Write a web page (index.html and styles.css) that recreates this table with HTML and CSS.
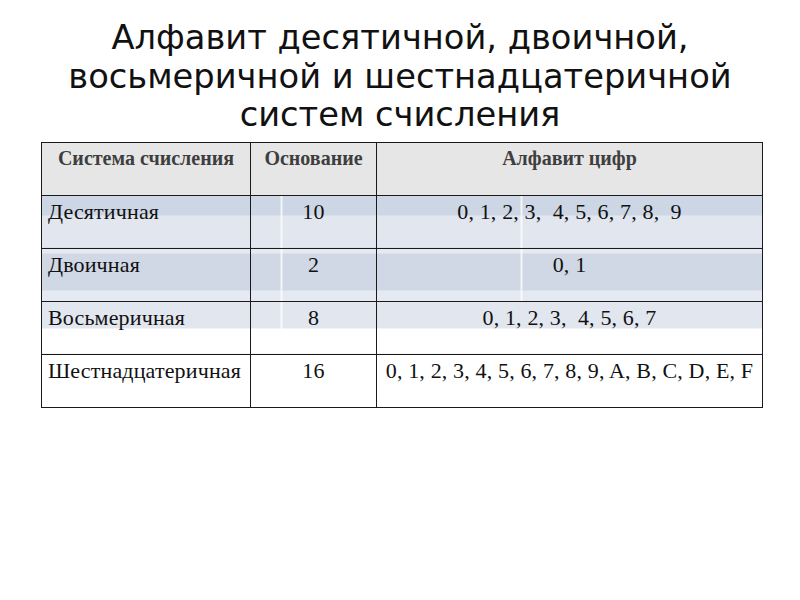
FILE: index.html
```html
<!DOCTYPE html>
<html lang="ru">
<head>
<meta charset="utf-8">
<link rel="stylesheet" href="styles.css">
</head>
<body>
<div class="slide">
  <h1 class="title">Алфавит десятичной, двоичной,<br>восьмеричной и шестнадцатеричной<br>систем счисления</h1>
  <table class="grid">
    <colgroup><col class="c1"><col class="c2"><col class="c3"></colgroup>
    <tr class="head">
      <th>Система счисления</th>
      <th>Основание</th>
      <th>Алфавит цифр</th>
    </tr>
    <tr class="r1">
      <td class="name">Десятичная</td>
      <td class="base">10</td>
      <td class="digits">0, 1, 2, 3,&nbsp; 4, 5, 6, 7, 8,&nbsp; 9</td>
    </tr>
    <tr class="r2">
      <td class="name">Двоичная</td>
      <td class="base">2</td>
      <td class="digits">0, 1</td>
    </tr>
    <tr class="r3">
      <td class="name">Восьмеричная</td>
      <td class="base">8</td>
      <td class="digits">0, 1, 2, 3,&nbsp; 4, 5, 6, 7</td>
    </tr>
    <tr class="r4">
      <td class="name">Шестнадцатеричная</td>
      <td class="base">16</td>
      <td class="digits">0, 1, 2, 3, 4, 5, 6, 7, 8, 9, A, B, C, D, E, F</td>
    </tr>
  </table>
</div>
</body>
</html>
```

FILE: styles.css
```css
html, body {
  margin: 0;
  padding: 0;
  background: #ffffff;
}
.slide {
  width: 800px;
  height: 600px;
  padding-top: 19px;
  box-sizing: border-box;
}
.title {
  margin: 0;
  font-family: "DejaVu Sans", sans-serif;
  font-weight: normal;
  font-size: 33.7px;
  line-height: 38.5px;
  color: #111111;
  text-align: center;
}
.grid {
  margin: 7px 0 0 41px;
  border-collapse: collapse;
  table-layout: fixed;
  width: 721px;
  font-family: "Liberation Serif", "Times New Roman", serif;
}
.c1 { width: 209px; }
.c2 { width: 126px; }
.c3 { width: 386px; }
.grid th, .grid td {
  border: 1.5px solid #1a1a1a;
  height: 53px;
  box-sizing: border-box;
  vertical-align: top;
  padding: 0;
}
.grid th {
  background: #e6e6e6;
  font-size: 20px;
  font-weight: bold;
  color: #3e3e3e;
  text-align: center;
  padding-top: 3px;
  line-height: 24px;
}
.grid td {
  font-size: 22px;
  letter-spacing: 0.15px;
  line-height: 24px;
  color: #111111;
  padding-top: 4px;
}
.grid .name { padding-left: 6px; text-align: left; }
.grid .base { text-align: center; }
.grid .digits { text-align: center; }

.r1 td {
  background-image: linear-gradient(to bottom, #cdd6e4 0, #cdd6e4 20px, #e2e6ef 20px);
}
.r2 td {
  background-image: linear-gradient(to bottom, #e5e9f1 0, #e5e9f1 5px, #d0d8e5 5px, #d0d8e5 42px, #e5e9f1 42px);
}
.r3 td {
  background-image: linear-gradient(to bottom, #e2e7ef 0, #e2e7ef 27px, #ffffff 27px);
}
.r4 td { background-color: #ffffff; }

/* faint vertical lines from the background bands */
.r1 .base {
  background-image:
    linear-gradient(to right, transparent 29px, rgba(255,255,255,0.75) 29px, rgba(255,255,255,0.75) 31px, transparent 31px),
    linear-gradient(to bottom, #cdd6e4 0, #cdd6e4 20px, #e2e6ef 20px);
}
.r2 .base {
  background-image:
    linear-gradient(to right, transparent 29px, rgba(255,255,255,0.75) 29px, rgba(255,255,255,0.75) 31px, transparent 31px),
    linear-gradient(to bottom, #e5e9f1 0, #e5e9f1 5px, #d0d8e5 5px, #d0d8e5 42px, #e5e9f1 42px);
}
.r3 .base {
  background-image:
    linear-gradient(to right, transparent 29px, rgba(255,255,255,0.75) 29px, rgba(255,255,255,0.75) 31px, transparent 31px),
    linear-gradient(to bottom, #e2e7ef 0, #e2e7ef 27px, #ffffff 27px);
}
.r1 .digits {
  background-image:
    linear-gradient(to right, transparent 143px, rgba(255,255,255,0.75) 143px, rgba(255,255,255,0.75) 145px, transparent 145px),
    linear-gradient(to bottom, #cdd6e4 0, #cdd6e4 20px, #e2e6ef 20px);
}
.r2 .digits {
  background-image:
    linear-gradient(to right, transparent 143px, rgba(255,255,255,0.75) 143px, rgba(255,255,255,0.75) 145px, transparent 145px),
    linear-gradient(to bottom, #e5e9f1 0, #e5e9f1 5px, #d0d8e5 5px, #d0d8e5 42px, #e5e9f1 42px);
}
```
